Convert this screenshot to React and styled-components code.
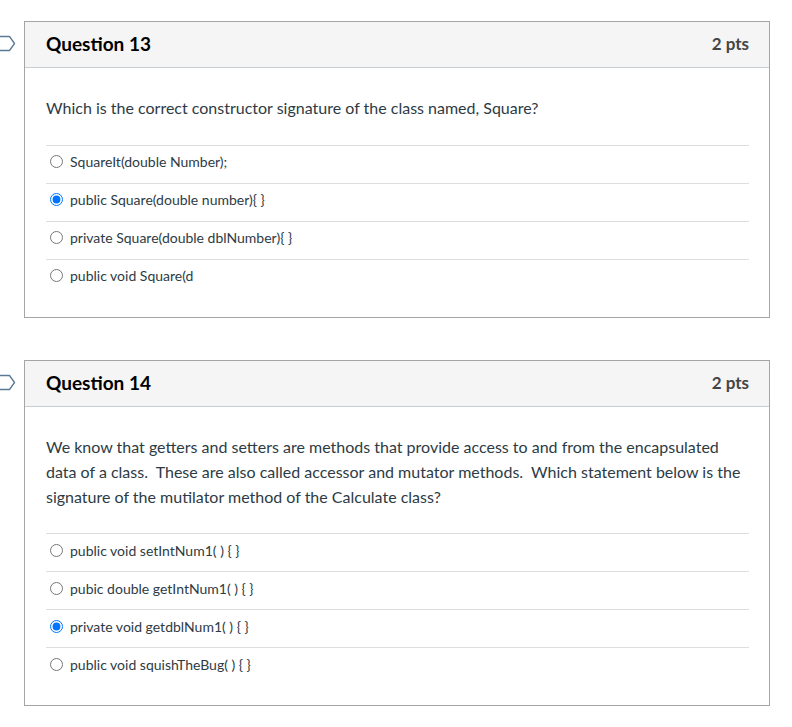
import React from 'react';
import styled, { createGlobalStyle } from 'styled-components';

const GlobalStyle = createGlobalStyle`
  body {
    margin: 0;
    background: #ffffff;
    font-family: Lato, 'Liberation Sans', sans-serif;
    color: #2d3b45;
  }
`;

const Page = styled.div`
  display: flex;
  flex-direction: column;
  gap: 42px;
  padding: 21px 22px 20px 24px;
`;

const QuestionBlock = styled.div`
  position: relative;
`;

const Marker = styled.svg`
  position: absolute;
  left: -24px;
  top: 14px;
`;

const Card = styled.div`
  border: 1px solid #a5a5a5;
  background: #fff;
`;

const Header = styled.div`
  display: flex;
  align-items: center;
  justify-content: space-between;
  height: 43px;
  padding: 0 20px 2px 21px;
  background: #f5f5f5;
  border-bottom: 1px solid #c7cdd1;
`;

const Title = styled.h2`
  margin: 0;
  font-size: 19px;
  font-weight: 700;
  color: #000;
`;

const Points = styled.span`
  font-size: 17px;
  font-weight: 700;
  color: #444;
`;

const Body = styled.div`
  padding: 27px 20px 20px 21px;
`;

const Prompt = styled.p`
  margin: 0 0 24.5px;
  font-size: 16px;
  line-height: 25px;
  color: #2d3b45;
`;

const Answers = styled.div`
  display: flex;
  flex-direction: column;
`;

const Answer = styled.label`
  display: flex;
  align-items: center;
  height: 32px;
  padding-bottom: 5px;
  border-top: 1px solid #dcdfe2;
  font-size: 14px;
  color: #2d3b45;
`;

const Radio = styled.input`
  width: 13px;
  height: 13px;
  margin: 0 7px 0 4px;
`;

const questions = [
  {
    title: 'Question 13',
    points: '2 pts',
    prompt: 'Which is the correct constructor signature of the class named, Square?',
    answers: [
      'SquareIt(double Number);',
      'public Square(double number){ }',
      'private Square(double dblNumber){ }',
      'public void Square(d',
    ],
    picked: 1,
  },
  {
    title: 'Question 14',
    points: '2 pts',
    prompt:
      'We know that getters and setters are methods that provide access to and from the encapsulated data of a class.  These are also called accessor and mutator methods.  Which statement below is the signature of the mutilator method of the Calculate class?',
    answers: [
      'public void setIntNum1( ) { }',
      'pubic double getIntNum1( ) { }',
      'private void getdblNum1( ) { }',
      'public void squishTheBug( ) { }',
    ],
    picked: 2,
  },
];

export default function App() {
  return (
    <>
      <GlobalStyle />
      <Page>
        {questions.map((q, qi) => (
          <QuestionBlock key={q.title}>
            <Marker width="18" height="18" viewBox="0 0 18 18">
              <path
                d="M-4 1.5 H9.5 L14.5 8.5 L9.5 15.5 H-4"
                fill="#fff"
                stroke="#5a7a96"
                strokeWidth="1.3"
                strokeLinejoin="round"
              />
            </Marker>
            <Card>
              <Header>
                <Title>{q.title}</Title>
                <Points>{q.points}</Points>
              </Header>
              <Body>
                <Prompt>{q.prompt.replace(/  /g, '\u00a0 ')}</Prompt>
                <Answers>
                  {q.answers.map((a, ai) => (
                    <Answer key={ai}>
                      <Radio
                        type="radio"
                        name={`q${qi}`}
                        defaultChecked={ai === q.picked}
                      />
                      {a}
                    </Answer>
                  ))}
                </Answers>
              </Body>
            </Card>
          </QuestionBlock>
        ))}
      </Page>
    </>
  );
}
